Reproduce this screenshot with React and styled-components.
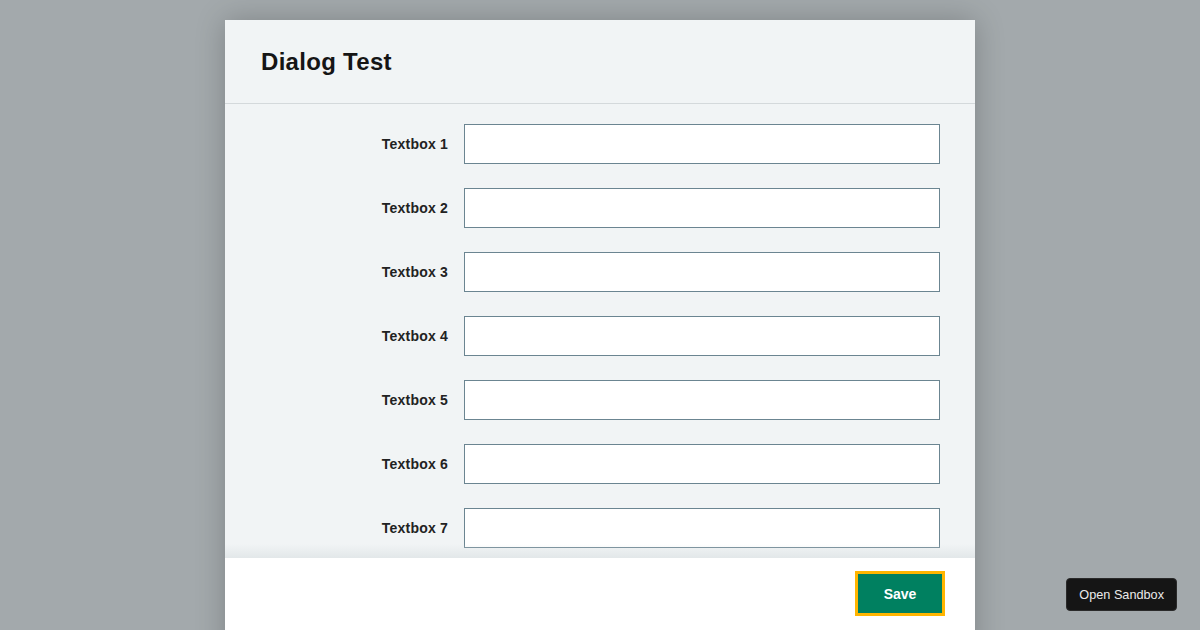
import React from "react";
import styled, { createGlobalStyle } from "styled-components";

const Global = createGlobalStyle`
  html, body { margin: 0; padding: 0; height: 100%; overflow: hidden; }
  body { font-family: "Liberation Sans", Arial, sans-serif; background: #a3a9ac; }
`;

const Backdrop = styled.div`
  width: 1200px;
  height: 630px;
  background: #a3a9ac;
  display: flex;
  justify-content: center;
  padding-top: 20px;
  box-sizing: border-box;
  overflow: hidden;
`;

const Dialog = styled.div`
  width: 750px;
  height: 640px;
  flex: none;
  background: #f1f4f5;
  box-shadow: 0 0 28px rgba(0, 0, 0, 0.22);
  display: flex;
  flex-direction: column;
`;

const Header = styled.div`
  height: 83px;
  flex: none;
  display: flex;
  align-items: center;
  padding: 0 36px;
  border-bottom: 1px solid #d4d9db;
`;

const Title = styled.h1`
  margin: 0;
  font-size: 24px;
  font-weight: 700;
  color: #151515;
  letter-spacing: 0.3px;
`;

const Body = styled.div`
  position: relative;
  height: 454px;
  flex: none;
  overflow: hidden;
  padding: 20px 35px 0;
  box-sizing: border-box;
  display: flex;
  flex-direction: column;
  gap: 24px;
  &::after {
    content: "";
    position: absolute;
    left: 0;
    right: 0;
    bottom: 0;
    height: 14px;
    background: linear-gradient(to bottom, rgba(220, 226, 228, 0), rgba(220, 226, 228, 0.7));
  }
`;

const Row = styled.div`
  display: grid;
  grid-template-columns: 30% 70%;
  align-items: center;
  flex: none;
`;

const Label = styled.label`
  text-align: right;
  padding-right: 16px;
  font-size: 14px;
  font-weight: 700;
  color: #222;
  letter-spacing: 0.2px;
`;

const Input = styled.input`
  height: 40px;
  box-sizing: border-box;
  border: 1px solid #6b8591;
  background: #fff;
  border-radius: 0;
  width: 100%;
  margin: 0;
  font-family: inherit;
  font-size: 14px;
`;

const Footer = styled.div`
  flex: 1;
  background: #fff;
  display: flex;
  justify-content: flex-end;
  align-items: flex-start;
  padding: 13px 30px;
`;

const SaveButton = styled.button`
  width: 90px;
  height: 45px;
  box-sizing: border-box;
  border: 3px solid #ffb500;
  background: #008060;
  color: #fff;
  font-family: inherit;
  font-size: 14px;
  font-weight: 700;
  cursor: pointer;
`;

const SandboxButton = styled.button`
  position: fixed;
  right: 23px;
  bottom: 19px;
  height: 33px;
  padding: 0 12px;
  background: #151515;
  color: #eaeaea;
  border: 1px solid #2a2a2a;
  border-radius: 4px;
  font-family: "Liberation Sans", Arial, sans-serif;
  font-size: 12.7px;
`;

const rows = [1, 2, 3, 4, 5, 6, 7];

export default function App() {
  return (
    <>
      <Global />
      <Backdrop>
        <Dialog>
          <Header>
            <Title>Dialog Test</Title>
          </Header>
          <Body>
            {rows.map((n) => (
              <Row key={n}>
                <Label htmlFor={`tb${n}`}>Textbox {n}</Label>
                <Input id={`tb${n}`} />
              </Row>
            ))}
          </Body>
          <Footer>
            <SaveButton>Save</SaveButton>
          </Footer>
        </Dialog>
      </Backdrop>
      <SandboxButton>Open Sandbox</SandboxButton>
    </>
  );
}
